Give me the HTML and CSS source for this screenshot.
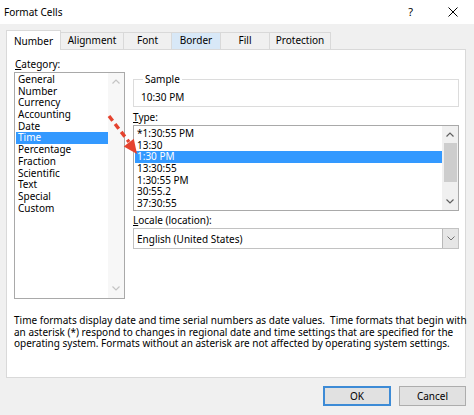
FILE: index.html
```html
<!DOCTYPE html>
<html>
<head>
<meta charset="utf-8">
<title>Format Cells</title>
<link rel="stylesheet" href="styles.css">
</head>
<body>
<div class="dialog">
  <div class="titlebar">
    <span class="title">Format Cells</span>
    <span class="help">?</span>
    <svg class="close" width="10" height="10" viewBox="0 0 10 10"><path d="M0.5 0.5L9.5 9.5M9.5 0.5L0.5 9.5" stroke="#000" stroke-width="1" fill="none"/></svg>
  </div>

  <div class="tabs">
    <div class="tab active w-number">Number</div>
    <div class="tab w-align">Alignment</div>
    <div class="tab w-font">Font</div>
    <div class="tab hover w-border">Border</div>
    <div class="tab w-fill">Fill</div>
    <div class="tab w-prot">Protection</div>
  </div>

  <div class="panel">
    <div class="columns">
      <div class="left">
        <div class="label cat-label"><u>C</u>ategory:</div>
        <div class="listbox cat-list">
          <div class="items">
            <div class="item">General</div>
            <div class="item">Number</div>
            <div class="item">Currency</div>
            <div class="item">Accounting</div>
            <div class="item">Date</div>
            <div class="item selected">Time</div>
            <div class="item">Percentage</div>
            <div class="item">Fraction</div>
            <div class="item">Scientific</div>
            <div class="item">Text</div>
            <div class="item">Special</div>
            <div class="item">Custom</div>
          </div>
          <div class="scrollbar disabled">
            <svg class="chev" width="8" height="5" viewBox="0 0 8 5"><path d="M0.5 4.5L4 1L7.5 4.5" stroke="#c4c4c4" stroke-width="1.2" fill="none"/></svg>
            <div class="track"></div>
            <svg class="chev" width="8" height="5" viewBox="0 0 8 5"><path d="M0.5 0.5L4 4L7.5 0.5" stroke="#c4c4c4" stroke-width="1.2" fill="none"/></svg>
          </div>
        </div>
      </div>

      <div class="right">
        <fieldset class="sample">
          <legend>Sample</legend>
          <div class="sample-value">10:30 PM</div>
        </fieldset>

        <div class="label type-label"><u>T</u>ype:</div>
        <div class="listbox type-list">
          <div class="items">
            <div class="item">*1:30:55 PM</div>
            <div class="item">13:30</div>
            <div class="item selected">1:30 PM</div>
            <div class="item">13:30:55</div>
            <div class="item">1:30:55 PM</div>
            <div class="item">30:55.2</div>
            <div class="item">37:30:55</div>
          </div>
          <div class="scrollbar">
            <div class="arrow"><svg width="8" height="5" viewBox="0 0 8 5"><path d="M0.5 4.5L4 1L7.5 4.5" stroke="#606060" stroke-width="1.2" fill="none"/></svg></div>
            <div class="thumb"></div>
            <div class="track"></div>
            <div class="arrow"><svg width="8" height="5" viewBox="0 0 8 5"><path d="M0.5 0.5L4 4L7.5 0.5" stroke="#606060" stroke-width="1.2" fill="none"/></svg></div>
          </div>
        </div>

        <div class="label locale-label"><u>L</u>ocale (location):</div>
        <div class="dropdown">
          <span class="dd-text">English (United States)</span>
          <span class="dd-button"><svg width="8" height="5" viewBox="0 0 8 5"><path d="M0.5 0.5L4 4L7.5 0.5" stroke="#707070" stroke-width="1" fill="none"/></svg></span>
        </div>
      </div>
    </div>

    <p class="description">Time formats display date and time serial numbers as date values.&nbsp; Time formats that begin with<br>an asterisk (*) respond to changes in regional date and time settings that are specified for the<br>operating system. Formats without an asterisk are not affected by operating system settings.</p>
  </div>

  <div class="buttons">
    <button class="btn ok">OK</button>
    <button class="btn cancel">Cancel</button>
  </div>

  <svg class="annotation" width="474" height="415" viewBox="0 0 474 415">
    <line x1="109" y1="116" x2="129" y2="142" stroke="#e5432f" stroke-width="3.4" stroke-dasharray="6 4"/>
    <polygon points="137,154 133.8,138.8 123.8,146.6" fill="#e5432f"/>
  </svg>
</div>
</body>
</html>
```

FILE: styles.css
```css
* { box-sizing: border-box; }

html, body {
  margin: 0;
  padding: 0;
}

body {
  width: 474px;
  height: 415px;
  overflow: hidden;
  background: #f0f0f0;
  font-family: "Noto Sans", "Open Sans", sans-serif;
  font-size: 10px;
  color: #000;
}

.dialog {
  position: relative;
  width: 474px;
  height: 415px;
}

.titlebar {
  height: 24px;
  background: #ffffff;
  display: flex;
  align-items: center;
  padding-left: 4px;
}

.title {
  font-size: 10px;
  line-height: 12px;
}

.help {
  margin-left: auto;
  font-size: 11px;
  line-height: 12px;
  margin-right: 35px;
}

.close {
  margin-right: 16px;
}

.tabs {
  display: flex;
  align-items: flex-end;
  height: 19px;
  margin-top: 6px;
  margin-left: 6px;
}

.tab {
  height: 17px;
  line-height: 15px;
  text-align: center;
  border-top: 1px solid #d9d9d9;
  border-right: 1px solid #d9d9d9;
  background: #f0f0f0;
}

.tab.active {
  height: 20px;
  line-height: 21px;
  margin-bottom: -1px;
  background: #ffffff;
  border-left: 1px solid #d9d9d9;
  z-index: 1;
}

.tab.hover {
  background: #d8e8f7;
}

.w-number { width: 55px; }
.w-align { width: 63px; }
.w-font { width: 48px; }
.w-border { width: 49px; }
.w-fill { width: 49px; }
.w-prot { width: 61px; }

.panel {
  margin-left: 6px;
  width: 460px;
  height: 329px;
  background: #ffffff;
  border: 1px solid #d9d9d9;
  padding: 8px 0 0 7px;
}

.columns {
  display: flex;
  gap: 8px;
}

.left {
  width: 111px;
}

.label {
  line-height: 12px;
  height: 12px;
}

.cat-label {
  margin-left: 1px;
  margin-bottom: 2px;
}

.listbox {
  display: flex;
  border: 1px solid #a9a9a9;
  background: #fff;
}

.cat-list {
  height: 227px;
}

.items {
  flex: 1;
  padding-top: 1px;
  padding-left: 1px;
}

.item {
  height: 11.7px;
  line-height: 11.7px;
  padding-left: 2px;
  white-space: nowrap;
}

.item.selected {
  background: #3399ff;
  color: #fff;
}

.scrollbar {
  width: 16px;
  display: flex;
  flex-direction: column;
  align-items: center;
  background: #f3f3f3;
}

.scrollbar.disabled {
  background: #f7f7f7;
  padding: 6px 0 7px;
}

.scrollbar .track {
  flex: 1;
}

.right {
  width: 326px;
  padding-top: 15px;
}

.sample {
  margin: 0;
  border: 1px solid #dcdcdc;
  padding: 0 7px 3px;
  min-width: 0;
}

.sample legend {
  padding: 0 2px;
  margin-left: 2px;
  line-height: 12px;
}

.sample-value {
  line-height: 12px;
  padding-top: 6px;
}

.type-label {
  margin-top: 4px;
  margin-bottom: 2px;
}

.type-list {
  height: 86px;
}

.type-list .items {
  padding-top: 2px;
}

.type-list .scrollbar {
  width: 16px;
  background: #f0f0f0;
}

.arrow {
  height: 17px;
  width: 100%;
  display: flex;
  align-items: center;
  justify-content: center;
}

.thumb {
  width: 13px;
  height: 39px;
  background: #cdcdcd;
}

.locale-label {
  margin-top: 3px;
  margin-bottom: 2px;
}

.dropdown {
  height: 21px;
  border: 1px solid #c2c2c2;
  display: flex;
  align-items: center;
  background: #fff;
}

.dd-text {
  flex: 1;
  padding-left: 3px;
  line-height: 12px;
}

.dd-button {
  width: 16px;
  height: 19px;
  background: #e6e6e6;
  border-left: 1px solid #b9b9b9;
  display: flex;
  align-items: center;
  justify-content: center;
}

.description {
  margin: 16px 0 0;
  line-height: 11.5px;
  white-space: nowrap;
}

.buttons {
  display: flex;
  justify-content: flex-end;
  gap: 8px;
  padding-right: 8px;
  margin-top: 8px;
}

.btn {
  font-family: "Noto Sans", "Open Sans", sans-serif;
  font-size: 10px;
  color: #000;
  height: 20px;
  background: #e1e1e1;
  border: 1px solid #adadad;
  padding: 0;
  line-height: 16px;
}

.btn.ok {
  width: 68px;
  border: 2px solid #3d8bd6;
}

.btn.cancel {
  width: 67px;
}

.annotation {
  position: absolute;
  left: 0;
  top: 0;
  pointer-events: none;
}
```
